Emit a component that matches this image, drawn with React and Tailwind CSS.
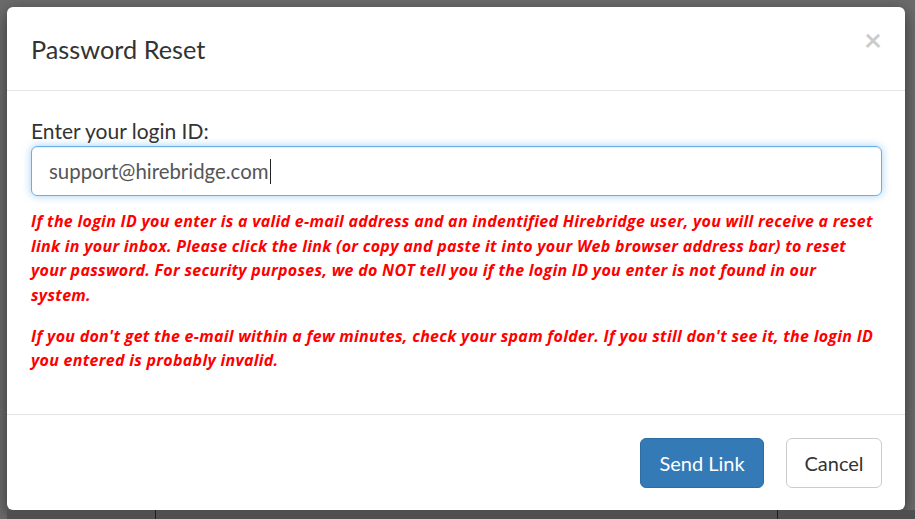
export default function App() {
  return (
    <div className="w-[915px] h-[519px] overflow-hidden bg-[#6b6b6b] pt-[7px] pl-[7px] font-['Lato','Liberation_Sans',sans-serif]">
      {/* Password reset modal */}
      <div className="w-[898px] h-[503px] bg-white rounded-[6px] shadow-[0_5px_15px_rgba(0,0,0,0.5)] flex flex-col">
        <div className="h-[84px] border-b border-[#e5e5e5] pl-[24px] pr-[23px] flex items-start justify-between">
          <h4 className="mt-[26px] text-[25.3px] leading-[32px] text-[#333]">Password Reset</h4>
          <button type="button" className="mt-[16px] text-[31px] leading-[32px] font-bold text-[#000] opacity-20">
            ×
          </button>
        </div>

        <div className="flex-1 pl-[24px] pr-[23px] pt-[26px]">
          <label className="block text-[21px] leading-[28px] text-[#333] mb-[1px]">Enter your login ID:</label>
          <div className="h-[50px] rounded-[6px] border border-[#66afe9] shadow-[inset_0_1px_1px_rgba(0,0,0,0.075),0_0_8px_rgba(102,175,233,0.6)] pl-[17px] flex items-center text-[20.4px] text-[#555]">
            support@hirebridge.com
            <span className="inline-block w-px h-[25px] bg-[#222] ml-px"></span>
          </div>
          <div className="mt-[13px] text-[16px] leading-[24.6px] tracking-[0.28px] font-bold italic text-[#ff0000] font-['Open_Sans','Liberation_Sans',sans-serif] whitespace-nowrap">
            <p className="mb-[16.5px]">
              If the login ID you enter is a valid e-mail address and an indentified Hirebridge user, you will receive a reset
              <br />
              link in your inbox. Please click the link (or copy and paste it into your Web browser address bar) to reset
              <br />
              your password. For security purposes, we do NOT tell you if the login ID you enter is not found in our
              <br />
              system.
            </p>
            <p>
              If you don't get the e-mail within a few minutes, check your spam folder. If you still don't see it, the login ID
              <br />
              you entered is probably invalid.
            </p>
          </div>
        </div>

        <div className="h-[96px] border-t border-[#e5e5e5] pr-[23px] flex items-center justify-end gap-[22px]">
          <button type="button" className="w-[124px] h-[50px] rounded-[6px] bg-[#337ab7] border border-[#2e6da4] text-white text-[20px]">
            Send Link
          </button>
          <button type="button" className="w-[96px] h-[50px] rounded-[6px] bg-white border border-[#ccc] text-[#333] text-[20px]">
            Cancel
          </button>
        </div>
      </div>

      {/* page behind the backdrop */}
      <div className="h-[9px] flex bg-[#4f4f4f]">
        <div className="w-[148px]"></div>
        <div className="w-px bg-[#1e1e1e]"></div>
        <div className="w-[621px]"></div>
        <div className="w-px bg-[#1e1e1e]"></div>
      </div>
    </div>
  )
}
